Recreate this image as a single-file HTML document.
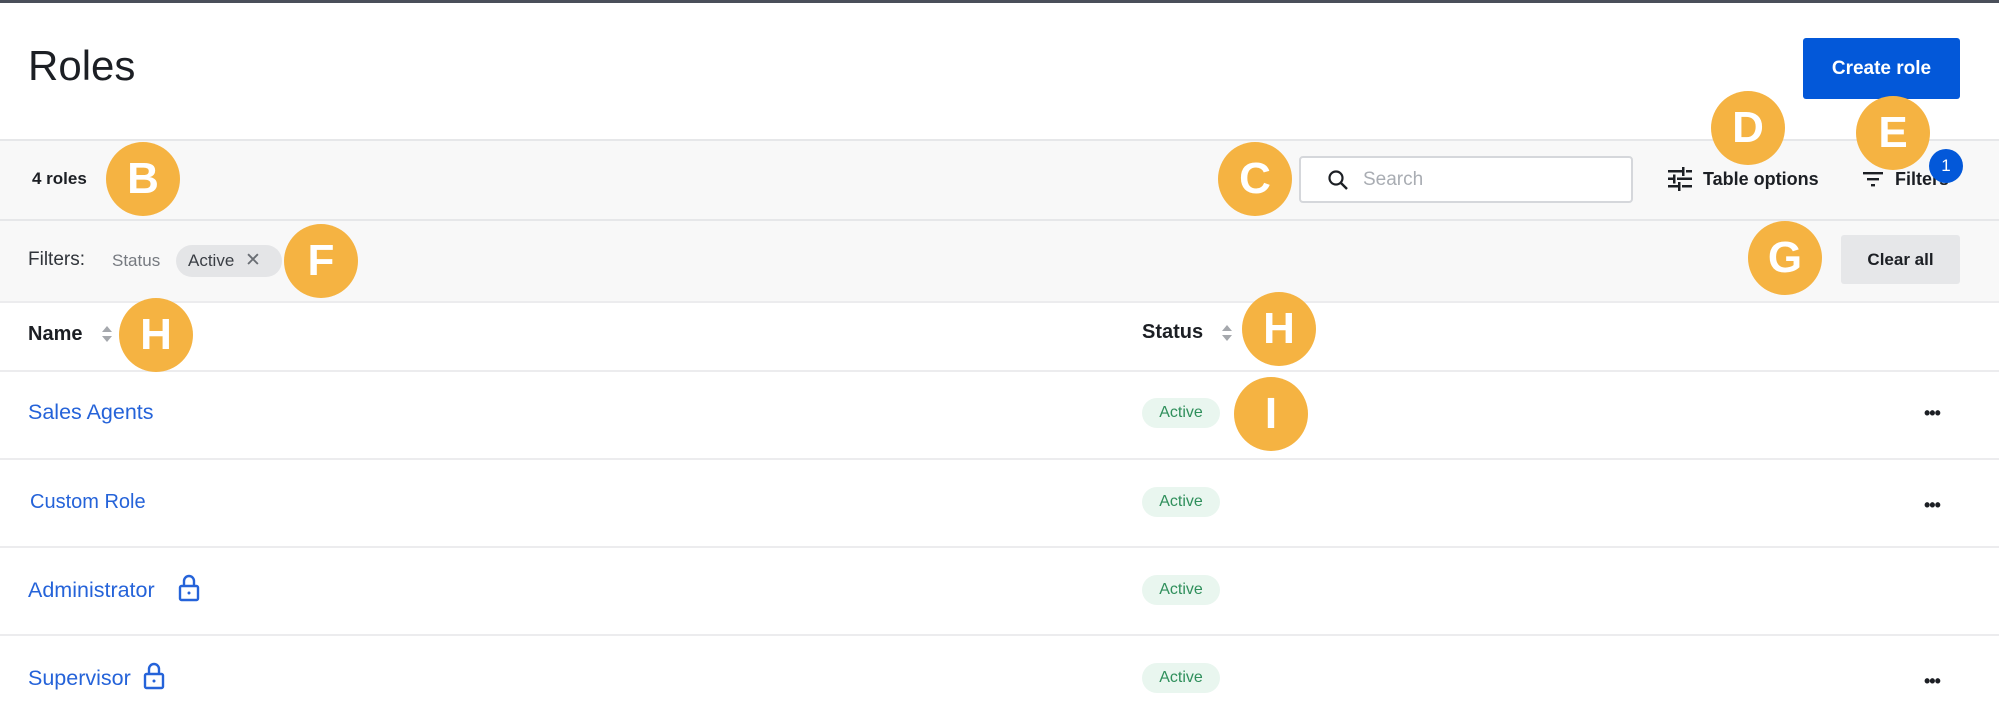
<!DOCTYPE html>
<html><head><meta charset="utf-8"><style>
*{box-sizing:border-box;margin:0;padding:0}
body{width:1999px;height:716px;overflow:hidden;background:#fff;font-family:"Liberation Sans",sans-serif;position:relative;color:#1c1f24}
.a{position:absolute}
.band{position:absolute;left:0;width:1999px;background:#f8f8f8;border-top:2px solid #e6e7e9}
.circ{position:absolute;width:74px;height:74px;border-radius:50%;background:#f5b342;color:#fff;font-weight:bold;font-size:44px;text-align:center;line-height:74px;margin:-37px 0 0 -37px}
.line{position:absolute;left:0;width:1999px;height:2px;background:#ececee}
.link{position:absolute;color:#2563d9;font-size:21.5px;left:28px}
.badge{position:absolute;left:1142px;width:78px;height:30px;border-radius:15px;background:#e9f6ef;color:#2f8f5b;font-size:16px;text-align:center;line-height:30px}
.dots{position:absolute;left:1924px;font-size:18px;font-weight:bold;letter-spacing:-1px;color:#1c1f24}
</style></head><body>
<div class="a" style="left:0;top:0;width:1999px;height:3px;background:#4a4f5a"></div>
<div class="a" style="left:28px;top:42px;font-size:42px;font-weight:500">Roles</div>
<div class="a" style="left:1803px;top:38px;width:157px;height:61px;background:#0358d9;border-radius:3px;color:#fff;font-size:19px;font-weight:bold;text-align:center;line-height:61px">Create role</div>

<div class="band" style="top:139px;height:82px"></div>
<div class="a" style="left:32px;top:169px;font-size:17px;font-weight:bold">4 roles</div>
<div class="a" style="left:1299px;top:156px;width:334px;height:47px;border:2px solid #d5d7db;border-radius:4px;background:#fff"></div>
<svg class="a" style="left:1326px;top:168px" width="24" height="24" viewBox="0 0 24 24"><circle cx="10" cy="10" r="6.5" fill="none" stroke="#1c1f24" stroke-width="2.2"/><path d="M15 15l6 6" stroke="#1c1f24" stroke-width="2.4"/></svg>
<div class="a" style="left:1363px;top:169px;font-size:19px;color:#a9adb3">Search</div>
<svg class="a" style="left:1667px;top:166px" width="26" height="26" viewBox="0 0 26 26" fill="#1c1f24"><rect x="1" y="4" width="14" height="2.5"/><rect x="19" y="4" width="6" height="2.5"/><rect x="15" y="1" width="2.5" height="9"/><rect x="1" y="11.5" width="5" height="2.5"/><rect x="10" y="11.5" width="15" height="2.5"/><rect x="6" y="8.5" width="2.5" height="9"/><rect x="1" y="19" width="10" height="2.5"/><rect x="15" y="19" width="10" height="2.5"/><rect x="11" y="16" width="2.5" height="9"/></svg>
<div class="a" style="left:1703px;top:169px;font-size:18px;font-weight:bold">Table options</div>
<svg class="a" style="left:1862px;top:168px" width="22" height="22" viewBox="0 0 22 22" fill="#1c1f24"><rect x="1" y="4" width="20" height="2.4"/><rect x="5" y="10" width="12" height="2.4"/><rect x="9" y="16" width="4" height="2.4"/></svg>
<div class="a" style="left:1895px;top:169px;font-size:18px;font-weight:bold">Filters</div>
<div class="a" style="left:1929px;top:149px;width:34px;height:34px;border-radius:50%;background:#0358d9;color:#fff;font-size:17px;text-align:center;line-height:34px">1</div>

<div class="band" style="top:219px;height:82px"></div>
<div class="a" style="left:28px;top:249px;font-size:19px;color:#30343a">Filters:</div>
<div class="a" style="left:112px;top:251px;font-size:17px;color:#767a80">Status</div>
<div class="a" style="left:176px;top:245px;width:106px;height:32px;border-radius:16px;background:#e4e5e7;font-size:17px;color:#3a3e44;line-height:32px;padding-left:12px">Active <span style="margin-left:6px;color:#6a6e74;font-size:19px">✕</span></div>
<div class="a" style="left:1841px;top:235px;width:119px;height:49px;background:#e6e7e9;border-radius:3px;font-size:17px;font-weight:bold;text-align:center;line-height:49px">Clear all</div>

<div class="line" style="top:301px"></div>
<div class="a" style="left:28px;top:323px;font-size:20px;font-weight:bold">Name</div>
<div class="a" style="left:1142px;top:321px;font-size:20px;font-weight:bold">Status</div>
<svg class="a" style="left:101px;top:325px" width="12" height="18" viewBox="0 0 12 18" fill="#a5a8ad"><path d="M6 1L11 7H1z M6 17L1 11h10z"/></svg>
<svg class="a" style="left:1221px;top:324px" width="12" height="18" viewBox="0 0 12 18" fill="#a5a8ad"><path d="M6 1L11 7H1z M6 17L1 11h10z"/></svg>

<div class="line" style="top:370px"></div>
<div class="line" style="top:458px"></div>
<div class="line" style="top:546px"></div>
<div class="line" style="top:634px"></div>

<div class="link" style="top:400px">Sales Agents</div>
<div class="link" style="top:491px;left:30px;font-size:20px">Custom Role</div>
<div class="link" style="top:578px">Administrator</div>
<div class="link" style="top:666px">Supervisor</div>
<svg class="a" style="left:178px;top:574px" width="22" height="28" viewBox="0 0 22 28" fill="none" stroke="#2563d9" stroke-width="2.4"><path d="M6 12V7a5 5 0 0 1 10 0v5"/><rect x="2" y="12" width="18" height="14" rx="1.5"/><circle cx="11" cy="19" r="1.5" fill="#2563d9" stroke="none"/></svg>
<svg class="a" style="left:143px;top:662px" width="22" height="28" viewBox="0 0 22 28" fill="none" stroke="#2563d9" stroke-width="2.4"><path d="M6 12V7a5 5 0 0 1 10 0v5"/><rect x="2" y="12" width="18" height="14" rx="1.5"/><circle cx="11" cy="19" r="1.5" fill="#2563d9" stroke="none"/></svg>

<div class="badge" style="top:398px">Active</div>
<div class="badge" style="top:487px">Active</div>
<div class="badge" style="top:575px">Active</div>
<div class="badge" style="top:663px">Active</div>

<div class="dots" style="top:403px">•••</div>
<div class="dots" style="top:495px">•••</div>
<div class="dots" style="top:671px">•••</div>

<div class="circ" style="left:143px;top:179px">B</div>
<div class="circ" style="left:1255px;top:179px">C</div>
<div class="circ" style="left:1748px;top:128px">D</div>
<div class="circ" style="left:1893px;top:133px">E</div>
<div class="circ" style="left:321px;top:261px">F</div>
<div class="circ" style="left:1785px;top:258px">G</div>
<div class="circ" style="left:156px;top:335px">H</div>
<div class="circ" style="left:1279px;top:329px">H</div>
<div class="circ" style="left:1271px;top:414px">I</div>
</body></html>
